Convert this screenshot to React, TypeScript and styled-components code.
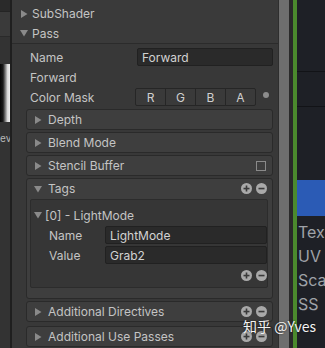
import React from "react";
import styled, { createGlobalStyle } from "styled-components";

const Global = createGlobalStyle`
  html, body { margin: 0; padding: 0; background: #383838; }
  body { font-family: Inter, "Noto Sans", sans-serif; }
  * { box-sizing: border-box; }
`;

const Page = styled.div`
  position: relative;
  display: flex;
  width: 325px;
  height: 348px;
  overflow: hidden;
  font-family: Inter, "Noto Sans", sans-serif;
  font-size: 12px;
  color: #c4c4c4;
`;

const LeftStrip = styled.div`
  width: 10px;
  display: flex;
  flex-direction: column;
  background: #333333;
`;
const StripTop = styled.div`
  height: 12px;
  background: #2a2a2a;
  border-bottom: 1px solid #242424;
`;
const StripBand = styled.div`
  height: 25px;
  background: #3a3a3a;
  border-bottom: 1px solid #2a2a2a;
`;
const StripGap = styled.div`
  height: 27px;
`;
const Preview = styled.div`
  height: 58px;
  background: linear-gradient(90deg, #050505 0%, #1a1a1a 30%, #d8d8d8 75%, #f0f0f0 100%);
`;
const StripLabel = styled.div`
  margin-top: 10px;
  font-size: 10px;
  color: #b8b8b8;
  white-space: nowrap;
  overflow: hidden;
  padding-left: 0;
`;

const Divider = styled.div`
  width: 2px;
  background: #1f1f1f;
`;

const Main = styled.div`
  width: 267px;
  display: flex;
  flex-direction: column;
  background: #383838;
  border-right: 1px solid #2e2e2e;
`;

const Header = styled.div`
  height: 44px;
  padding-top: 4px;
  background: #3a3a3a;
  border-bottom: 1px solid #2b2b2b;
  display: flex;
  flex-direction: column;
`;

const HeaderRow = styled.div`
  height: 20px;
  display: flex;
  align-items: center;
  padding-left: 8px;
  gap: 4px;
`;

const Content = styled.div`
  display: flex;
  flex-direction: column;
  padding-top: 3px;
`;

const Row = styled.div`
  height: 20px;
  display: flex;
  align-items: center;
  padding-left: 18px;
`;

const Label = styled.div<{ $w?: number }>`
  width: ${(p) => (p.$w ? `${p.$w}px` : "auto")};
  flex: none;
  white-space: nowrap;
`;

const Input = styled.div<{ $w: number }>`
  width: ${(p) => p.$w}px;
  height: 18px;
  background: #2a2a2a;
  border: 1px solid #212121;
  border-radius: 2px;
  padding-left: 4px;
  display: flex;
  align-items: center;
  color: #d2d2d2;
  white-space: nowrap;
  overflow: hidden;
`;

const MaskGroup = styled.div`
  display: flex;
  align-items: center;
  height: 18px;
  margin-left: -2px;
`;
const MaskButton = styled.div`
  width: 31px;
  height: 18px;
  background: #3a3a3a;
  border: 1px solid #262626;
  margin-left: -1px;
  display: flex;
  align-items: center;
  justify-content: center;
  color: #d0d0d0;
  &:first-child { border-radius: 2px 0 0 2px; margin-left: 0; }
  &:last-child { border-radius: 0 2px 2px 0; }
`;
const Dot = styled.div`
  width: 6px;
  height: 6px;
  border-radius: 50%;
  background: #8c8c8c;
  margin-left: 7px;
  margin-top: -4px;
`;

const Boxes = styled.div`
  display: flex;
  flex-direction: column;
  gap: 2px;
  padding: 2px 5px 0 14px;
`;

const Box = styled.div<{ $mt?: number }>`
  background: #3e3e3e;
  border: 1px solid #2a2a2a;
  border-radius: 3px;
  display: flex;
  flex-direction: column;
  margin-top: ${(p) => p.$mt ?? 0}px;
`;

const BoxHead = styled.div`
  height: 19px;
  display: flex;
  align-items: center;
  padding-left: 7px;
  padding-right: 5px;
  gap: 6px;
`;

const Grow = styled.div`
  flex: 1;
`;

const Check = styled.div`
  width: 10px;
  height: 10px;
  border: 1px solid #8a8a8a;
  margin-right: 1px;
`;

const TagBody = styled.div`
  padding: 1px 4px 10px 3px;
`;

const Inner = styled.div`
  background: #363636;
  border: 1px solid #2c2c2c;
  border-radius: 2px;
  display: flex;
  flex-direction: column;
  padding-top: 5px;
`;

const ItemHead = styled.div`
  height: 20px;
  display: flex;
  align-items: center;
  padding-left: 3px;
  gap: 3px;
`;

const ItemRow = styled.div`
  height: 20px;
  display: flex;
  align-items: center;
  padding-left: 18px;
`;

const InnerFoot = styled.div`
  height: 22px;
  display: flex;
  align-items: center;
  justify-content: flex-end;
  padding-bottom: 2px;
`;

const Buttons = styled.div`
  display: flex;
  gap: 4px;
`;

const Scrollbar = styled.div`
  width: 10px;
  background: #6e6e6e;
`;
const DarkGap = styled.div`
  width: 4px;
  background: #2a2a2a;
`;
const Green = styled.div`
  width: 4px;
  background: #4b8a2d;
`;

const Hierarchy = styled.div`
  flex: 1;
  background: #1e2026;
  display: flex;
  flex-direction: column;
  overflow: hidden;
`;
const HRow = styled.div<{ $h: number; $line?: boolean }>`
  height: ${(p) => p.$h}px;
  flex: none;
  border-bottom: ${(p) => (p.$line ? "1px solid #121317" : "none")};
`;
const Selected = styled.div`
  height: 36px;
  flex: none;
  background: #2b5bb5;
  margin-bottom: 4px;
`;
const HText = styled.div`
  height: 24px;
  flex: none;
  display: flex;
  align-items: center;
  padding-left: 1px;
  font-size: 16px;
  color: #9ea2a8;
  white-space: nowrap;
`;

const Watermark = styled.div`
  position: absolute;
  left: 243px;
  top: 316px;
  font-family: "Noto Sans CJK SC", "Noto Sans", sans-serif;
  font-size: 14px;
  color: #f2f2f2;
  text-shadow: 0 0 2px rgba(0, 0, 0, 0.6);
  white-space: nowrap;
`;

const Tri = ({ open }: { open?: boolean }) => (
  <svg width="8" height="8" viewBox="0 0 8 8" style={{ flex: "none" }}>
    {open ? (
      <polygon points="0,1 8,1 4,7.5" fill="#8a8a8a" />
    ) : (
      <polygon points="1,0 7.5,4 1,8" fill="#8a8a8a" />
    )}
  </svg>
);

const Circle = ({ plus }: { plus?: boolean }) => (
  <svg width="11" height="11" viewBox="0 0 11 11">
    <circle cx="5.5" cy="5.5" r="5.5" fill="#a9a9a9" />
    <rect x="2.5" y="4.75" width="6" height="1.6" fill="#3a3a3a" />
    {plus && <rect x="4.7" y="2.5" width="1.6" height="6" fill="#3a3a3a" />}
  </svg>
);

const PlusMinus = () => (
  <Buttons>
    <Circle plus />
    <Circle />
  </Buttons>
);

export default function App() {
  return (
    <>
      <Global />
      <Page>
        <LeftStrip>
          <StripTop />
          <StripBand />
          <StripGap />
          <Preview />
          <StripLabel>ev</StripLabel>
        </LeftStrip>
        <Divider />
        <Main>
          <Header>
            <HeaderRow>
              <Tri />
              <Label>SubShader</Label>
            </HeaderRow>
            <HeaderRow>
              <Tri open />
              <Label>Pass</Label>
            </HeaderRow>
          </Header>
          <Content>
            <Row>
              <Label $w={107}>Name</Label>
              <Input $w={136}>Forward</Input>
            </Row>
            <Row>
              <Label>Forward</Label>
            </Row>
            <Row>
              <Label $w={107}>Color Mask</Label>
              <MaskGroup>
                <MaskButton>R</MaskButton>
                <MaskButton>G</MaskButton>
                <MaskButton>B</MaskButton>
                <MaskButton>A</MaskButton>
              </MaskGroup>
              <Dot />
            </Row>
            <Boxes>
              <Box>
                <BoxHead>
                  <Tri />
                  <Label>Depth</Label>
                </BoxHead>
              </Box>
              <Box>
                <BoxHead>
                  <Tri />
                  <Label>Blend Mode</Label>
                </BoxHead>
              </Box>
              <Box>
                <BoxHead>
                  <Tri />
                  <Label>Stencil Buffer</Label>
                  <Grow />
                  <Check />
                </BoxHead>
              </Box>
              <Box>
                <BoxHead>
                  <Tri open />
                  <Label>Tags</Label>
                  <Grow />
                  <PlusMinus />
                </BoxHead>
                <TagBody>
                  <Inner>
                    <ItemHead>
                      <Tri open />
                      <Label>[0] - LightMode</Label>
                    </ItemHead>
                    <ItemRow>
                      <Label $w={56}>Name</Label>
                      <Input $w={162}>LightMode</Input>
                    </ItemRow>
                    <ItemRow>
                      <Label $w={56}>Value</Label>
                      <Input $w={162}>Grab2</Input>
                    </ItemRow>
                    <InnerFoot>
                      <PlusMinus />
                    </InnerFoot>
                  </Inner>
                </TagBody>
              </Box>
              <Box>
                <BoxHead>
                  <Tri />
                  <Label>Additional Directives</Label>
                  <Grow />
                  <PlusMinus />
                </BoxHead>
              </Box>
              <Box $mt={2}>
                <BoxHead>
                  <Tri />
                  <Label>Additional Use Passes</Label>
                  <Grow />
                  <PlusMinus />
                </BoxHead>
              </Box>
            </Boxes>
          </Content>
        </Main>
        <Scrollbar />
        <DarkGap />
        <Green />
        <Hierarchy>
          <HRow $h={72} $line />
          <HRow $h={35} $line />
          <HRow $h={73} />
          <Selected />
          <HText>Tex</HText>
          <HText>UV</HText>
          <HText>Scal</HText>
          <HText>SS</HText>
        </Hierarchy>
        <Watermark>知乎 @Yves</Watermark>
      </Page>
    </>
  );
}
